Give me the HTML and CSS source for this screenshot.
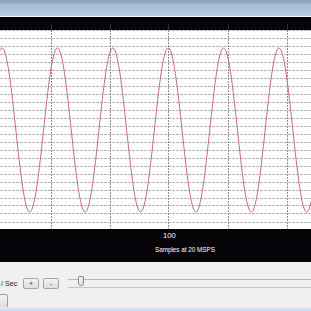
FILE: index.html
```html
<!DOCTYPE html>
<html>
<head>
<meta charset="utf-8">
<link rel="stylesheet" href="styles.css">
</head>
<body>
<div class="window">
  <div class="titlebar"></div>
  <svg class="chart" width="311" height="212" viewBox="0 0 311 212">
    <rect x="0" y="0" width="311" height="13" fill="#050307"/>
    <g stroke="#2e2e2e" stroke-width="1">
      <line x1="51.5" y1="7" x2="51.5" y2="13"/>
      <line x1="110.5" y1="7" x2="110.5" y2="13"/>
      <line x1="168.5" y1="7" x2="168.5" y2="13"/>
      <line x1="228.5" y1="7" x2="228.5" y2="13"/>
      <line x1="287.5" y1="7" x2="287.5" y2="13"/>
    </g>
    <g transform="translate(0,13)">
      <rect x="0" y="0" width="311" height="199" fill="#ffffff"/>
      <g stroke="#b6b6b6" stroke-width="1" stroke-dasharray="3 1">
        <line x1="0" y1="0.5" x2="311" y2="0.5"/>
        <line x1="0" y1="8.5" x2="311" y2="8.5"/>
        <line x1="0" y1="16.5" x2="311" y2="16.5"/>
        <line x1="0" y1="24.5" x2="311" y2="24.5"/>
        <line x1="0" y1="32.5" x2="311" y2="32.5"/>
        <line x1="0" y1="40.5" x2="311" y2="40.5"/>
        <line x1="0" y1="48.5" x2="311" y2="48.5"/>
        <line x1="0" y1="56.5" x2="311" y2="56.5"/>
        <line x1="0" y1="64.5" x2="311" y2="64.5"/>
        <line x1="0" y1="72.5" x2="311" y2="72.5"/>
        <line x1="0" y1="80.5" x2="311" y2="80.5"/>
        <line x1="0" y1="88.5" x2="311" y2="88.5"/>
        <line x1="0" y1="96.5" x2="311" y2="96.5"/>
        <line x1="0" y1="104.5" x2="311" y2="104.5"/>
        <line x1="0" y1="112.5" x2="311" y2="112.5"/>
        <line x1="0" y1="120.5" x2="311" y2="120.5"/>
        <line x1="0" y1="128.5" x2="311" y2="128.5"/>
        <line x1="0" y1="136.5" x2="311" y2="136.5"/>
        <line x1="0" y1="144.5" x2="311" y2="144.5"/>
        <line x1="0" y1="152.5" x2="311" y2="152.5"/>
        <line x1="0" y1="160.5" x2="311" y2="160.5"/>
        <line x1="0" y1="168.5" x2="311" y2="168.5"/>
        <line x1="0" y1="175.5" x2="311" y2="175.5"/>
        <line x1="0" y1="183.5" x2="311" y2="183.5"/>
        <line x1="0" y1="192.5" x2="311" y2="192.5"/>
      </g>
      <g stroke="#8e8e8e" stroke-width="1" stroke-dasharray="2 1">
        <line x1="51.5" y1="0" x2="51.5" y2="199"/>
        <line x1="110.5" y1="0" x2="110.5" y2="199"/>
        <line x1="168.5" y1="0" x2="168.5" y2="199"/>
        <line x1="228.5" y1="0" x2="228.5" y2="199"/>
        <line x1="287.5" y1="0" x2="287.5" y2="199"/>
      </g>
      <path fill="none" stroke="#c56a86" stroke-width="1"
        d="M-67.25,100
           c4.517,-42 8.837,-82 13.85,-82 c5.013,0 9.333,40 13.85,82 c4.517,42 8.837,82 13.85,82 c5.013,0 9.333,-40 13.85,-82
           c4.517,-42 8.837,-82 13.85,-82 c5.013,0 9.333,40 13.85,82 c4.517,42 8.837,82 13.85,82 c5.013,0 9.333,-40 13.85,-82
           c4.517,-42 8.837,-82 13.85,-82 c5.013,0 9.333,40 13.85,82 c4.517,42 8.837,82 13.85,82 c5.013,0 9.333,-40 13.85,-82
           c4.517,-42 8.837,-82 13.85,-82 c5.013,0 9.333,40 13.85,82 c4.517,42 8.837,82 13.85,82 c5.013,0 9.333,-40 13.85,-82
           c4.517,-42 8.837,-82 13.85,-82 c5.013,0 9.333,40 13.85,82 c4.517,42 8.837,82 13.85,82 c5.013,0 9.333,-40 13.85,-82
           c4.517,-42 8.837,-82 13.85,-82 c5.013,0 9.333,40 13.85,82 c4.517,42 8.837,82 13.85,82 c5.013,0 9.333,-40 13.85,-82
           c4.517,-42 8.837,-82 13.85,-82 c5.013,0 9.333,40 13.85,82 c4.517,42 8.837,82 13.85,82 c5.013,0 9.333,-40 13.85,-82
           c4.517,-42 8.837,-82 13.85,-82 c5.013,0 9.333,40 13.85,82 c4.517,42 8.837,82 13.85,82 c5.013,0 9.333,-40 13.85,-82"/>
    </g>
  </svg>
  <div class="axisband">
    <div class="axis-value">100</div>
    <div class="axis-title">Samples at 20 MSPS</div>
  </div>
  <div class="panel">
    <div class="row">
      <div class="label">/ Sec</div>
      <button class="btn">+</button>
      <button class="btn">-</button>
      <div class="slider">
        <div class="track"></div>
        <div class="thumb"></div>
      </div>
    </div>
    <div class="row2">
      <button class="bigbtn"></button>
    </div>
  </div>
  <div class="statusbar"></div>
</div>
</body>
</html>
```
FILE: styles.css
```css
html, body {
  margin: 0;
  padding: 0;
  width: 311px;
  height: 311px;
  overflow: hidden;
  background: #f0f0f0;
  font-family: "Liberation Sans", Arial, sans-serif;
}
.window {
  display: flex;
  flex-direction: column;
  width: 311px;
  height: 311px;
}
.titlebar {
  height: 16px;
  border-bottom: 1px solid #f4f8fc;
  background: linear-gradient(to bottom, #8ea2b7 0px, #93a8be 3px, #a6bdd7 4px, #b7cde6 16px);
  flex: none;
}
.chart {
  display: block;
  flex: none;
}
.axisband {
  height: 33px;
  background: #050307;
  color: #ffffff;
  display: flex;
  flex-direction: column;
  flex: none;
}
.axis-value {
  font-size: 7.6px;
  line-height: 8px;
  padding-left: 163px;
  margin-top: 3px;
}
.axis-title {
  font-size: 6.3px;
  line-height: 7px;
  padding-left: 155px;
  margin-top: 6px;
}
.panel {
  height: 45px;
  background: #f0f0f0;
  display: flex;
  flex-direction: column;
  flex: none;
}
.row {
  display: flex;
  align-items: center;
  margin-top: 16px;
  height: 11px;
}
.label {
  width: 20px;
  padding-left: 1px;
  box-sizing: border-box;
  white-space: nowrap;
  font-size: 7.2px;
  color: #222;
  flex: none;
}
.btn {
  box-sizing: border-box;
  width: 16px;
  height: 11px;
  margin: 0 0 0 3px;
  padding: 0;
  border: 1px solid #a4a4a4;
  border-radius: 2px;
  background: linear-gradient(to bottom, #f4f4f4, #dedede);
  font-family: "Liberation Sans", Arial, sans-serif;
  font-size: 7px;
  line-height: 8px;
  color: #333;
  flex: none;
}
.btn + .btn {
  margin-left: 4px;
}
.slider {
  position: relative;
  flex: 1;
  margin-left: 9px;
  height: 11px;
}
.track {
  box-sizing: border-box;
  height: 9px;
  margin-top: 1px;
  border-top: 1px solid #b6b6b6;
  border-bottom: 1px solid #c6c6c6;
}
.thumb {
  position: absolute;
  left: 10px;
  top: -2px;
  box-sizing: border-box;
  width: 6px;
  height: 10px;
  border: 1px solid #8a8a8a;
  border-radius: 1px 1px 3px 3px;
  background: linear-gradient(to right, #fafafa, #dcdcdc);
}
.row2 {
  display: flex;
  margin-top: 5px;
}
.bigbtn {
  box-sizing: border-box;
  width: 11px;
  height: 14px;
  margin: 0 0 0 -3px;
  padding: 0;
  border: 1px solid #9c9c9c;
  border-radius: 2px;
  background: linear-gradient(to bottom, #f4f4f4, #dcdcdc);
}
.statusbar {
  flex: 1;
  background: linear-gradient(to bottom, #d6e7f6, #c6dcf0);
  border-top: 1px solid #e6eef6;
}
```
